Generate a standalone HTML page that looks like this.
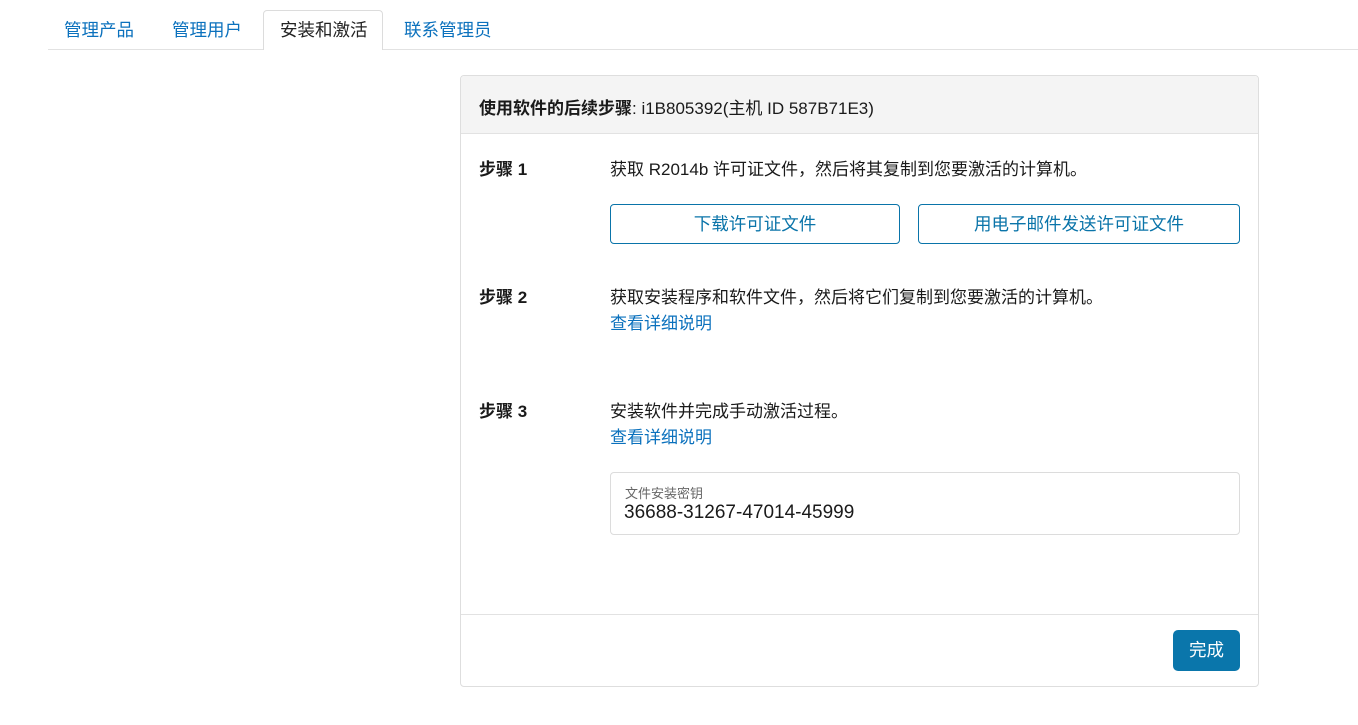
<!DOCTYPE html>
<html><head><meta charset="utf-8"><style>
*{box-sizing:border-box;margin:0;padding:0}
body{width:1358px;height:725px;background:#fff;font-family:"Liberation Sans","Noto Sans CJK SC",sans-serif;font-size:17px;color:#1a1a1a;position:relative;overflow:hidden}
.abs{position:absolute;white-space:nowrap}
.tabs{position:absolute;left:48px;top:49px;width:1310px;border-top:1px solid #e2e2e2}
.tab{position:absolute;top:17px;font-size:17.5px;color:#0b71bd}
.act{position:absolute;left:263px;top:10px;width:120px;height:40px;border:1px solid #dcdcdc;border-bottom:none;border-radius:4px 4px 0 0;background:#fff}
.card{position:absolute;left:460px;top:75px;width:799px;height:612px;border:1px solid #dedede;border-radius:4px}
.hdr{position:absolute;left:0;top:0;width:797px;height:58px;background:#f4f4f4;border-bottom:1px solid #e2e2e2;border-radius:4px 4px 0 0}
.btn{position:absolute;top:204px;height:40px;border:1px solid #0a74a9;border-radius:4px;color:#0a74a9;font-size:17.5px;text-align:center;line-height:38px}
a{color:#0b71bd;text-decoration:none}
</style></head><body>
<div class="tabs"></div>
<div class="act"></div>
<div class="tab" style="left:64px">管理产品</div>
<div class="tab" style="left:172px">管理用户</div>
<div class="tab" style="left:280px;color:#222">安装和激活</div>
<div class="tab" style="left:404px">联系管理员</div>
<div class="card"><div class="hdr"></div>
<div style="position:absolute;left:0;top:538px;width:797px;border-top:1px solid #e2e2e2"></div></div>
<div class="abs" style="left:479px;top:94px"><b>使用软件的后续步骤</b>: i1B805392(主机 ID 587B71E3)</div>
<div class="abs" style="left:479px;top:155px;font-weight:bold">步骤 1</div>
<div class="abs" style="left:610px;top:155px">获取 R2014b 许可证文件，然后将其复制到您要激活的计算机。</div>
<div class="btn" style="left:610px;width:290px">下载许可证文件</div>
<div class="btn" style="left:918px;width:322px">用电子邮件发送许可证文件</div>
<div class="abs" style="left:479px;top:283px;font-weight:bold">步骤 2</div>
<div class="abs" style="left:610px;top:283px">获取安装程序和软件文件，然后将它们复制到您要激活的计算机。</div>
<div class="abs" style="left:610px;top:309px"><a>查看详细说明</a></div>
<div class="abs" style="left:479px;top:397px;font-weight:bold">步骤 3</div>
<div class="abs" style="left:610px;top:397px">安装软件并完成手动激活过程。</div>
<div class="abs" style="left:610px;top:423px"><a>查看详细说明</a></div>
<div style="position:absolute;left:610px;top:472px;width:630px;height:63px;border:1px solid #dcdcdc;border-radius:4px"></div>
<div class="abs" style="left:625px;top:483px;font-size:13px;color:#666">文件安装密钥</div>
<div class="abs" style="left:624px;top:502px;font-size:19px">36688-31267-47014-45999</div>
<div style="position:absolute;left:1173px;top:630px;width:67px;height:41px;background:#0a76ab;border-radius:5px;color:#fff;font-size:17.5px;text-align:center;line-height:41px">完成</div>
</body></html>
